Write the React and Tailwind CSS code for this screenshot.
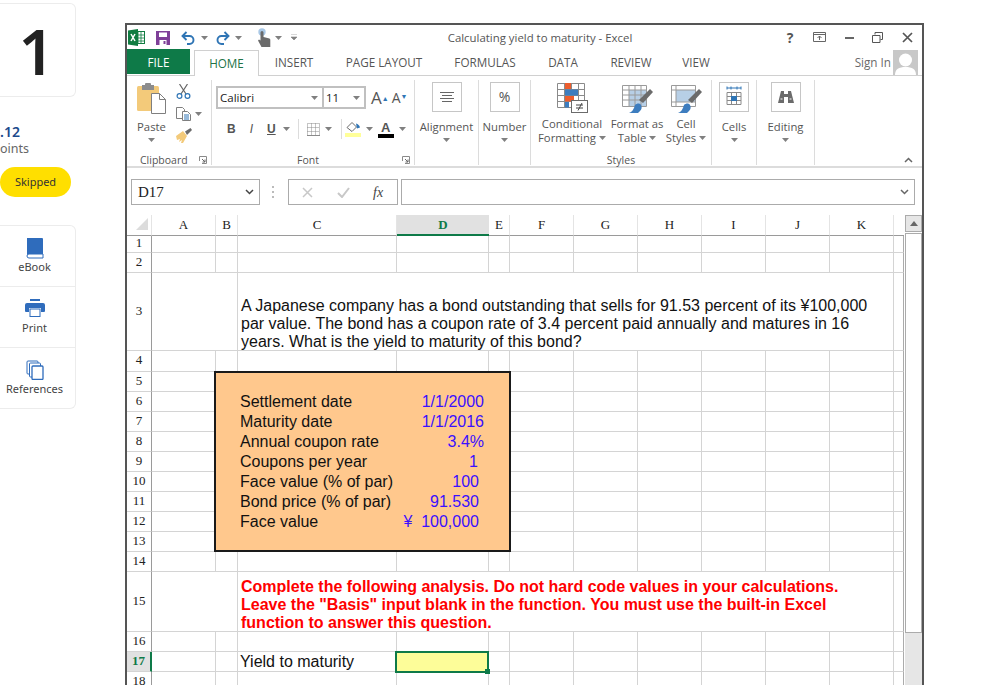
import { Fragment } from 'react'

const COLS = ['A', 'B', 'C', 'D', 'E', 'F', 'G', 'H', 'I', 'J', 'K', '']
const ROW_NUMS = [1, 2, 3, 4, 5, 6, 7, 8, 9, 10, 11, 12, 13, 14, 15, 16, 17, 18]
const BOX_ROWS = [
  { label: 'Settlement date', value: '1/1/2000', cls: '' },
  { label: 'Maturity date', value: '1/1/2016', cls: '' },
  { label: 'Annual coupon rate', value: '3.4%', cls: '' },
  { label: 'Coupons per year', value: '1', cls: 'pr-[6px]' },
  { label: 'Face value (% of par)', value: '100', cls: 'pr-[5px]' },
  { label: 'Bond price (% of par)', value: '91.530', cls: 'pr-[5px]' },
  { label: 'Face value', value: '¥\u00a0\u00a0100,000', cls: 'pr-[5px]' },
]

function Caret({ className = '' }) {
  return (
    <svg width="7" height="4" viewBox="0 0 7 4" className={className}>
      <path d="M0 0h7L3.5 4z" fill="#808080" />
    </svg>
  )
}

function Launcher() {
  return (
    <svg width="8" height="8" viewBox="0 0 8 8" className="ml-auto mr-[4px]">
      <path d="M.5 5V.5H7.5V7.5H3" fill="none" stroke="#8a8a8a" />
      <path d="M3 3l3 3M6 3.5V6H3.5" fill="none" stroke="#666" />
    </svg>
  )
}

function ExcelIcon() {
  return (
    <svg width="17" height="17" viewBox="0 0 17 17">
      <rect x="6" y="2.5" width="10.5" height="12" fill="#fff" stroke="#107c41" />
      <path d="M10 3v11M13 3v11M7 6h9M7 9h9M7 12h9" stroke="#107c41" strokeWidth=".8" />
      <path d="M0 1.5 10 0v17L0 15.5z" fill="#107c41" />
      <path d="M3 5l4 7M7 5l-4 7" stroke="#fff" strokeWidth="1.5" />
    </svg>
  )
}

function SaveIcon() {
  return (
    <svg width="14" height="14" viewBox="0 0 14 14">
      <rect width="14" height="14" fill="#7e3f98" />
      <rect x="3" y="1.5" width="8" height="4.5" fill="#fff" />
      <rect x="3.5" y="9" width="7" height="5" fill="#fff" />
      <rect x="7.5" y="10" width="2" height="3" fill="#7e3f98" />
    </svg>
  )
}

function UndoIcon({ flip }) {
  return (
    <svg width="15" height="14" viewBox="0 0 15 14" className={flip ? '-scale-x-100' : ''}>
      <path d="M5.5 1 1.5 5l4 4" fill="none" stroke="#2f75b5" strokeWidth="1.9" />
      <path d="M2 5h6.5a4 4 0 0 1 0 8H6" fill="none" stroke="#2f75b5" strokeWidth="1.9" />
    </svg>
  )
}

function TouchIcon() {
  return (
    <svg width="15" height="19" viewBox="0 0 15 19">
      <circle cx="5" cy="4" r="3.7" fill="#a9c8e6" />
      <path d="M3.5 4.5a1.5 1.5 0 0 1 3 0V9l6 1.5.8 1V19H4.5L1 12.5l1-1 1.5 1z" fill="#6b6b6b" />
    </svg>
  )
}

function PasteIcon() {
  return (
    <svg width="29" height="31" viewBox="0 0 29 31">
      <rect x="0" y="3" width="22" height="25" rx="1.5" fill="#f3ca7a" />
      <rect x="5" y="2" width="12" height="5" fill="#8c8c8c" />
      <rect x="8" y="0" width="6" height="3" rx="1" fill="#8c8c8c" />
      <path d="M14.5 10.5h8l6 6v14h-14z" fill="#fff" stroke="#7f7f7f" />
      <path d="M22.5 10.5v6h6" fill="none" stroke="#7f7f7f" />
    </svg>
  )
}

function CutIcon() {
  return (
    <svg width="15" height="15" viewBox="0 0 15 15">
      <path d="M3.5 0 10 10M11.5 0 5 10" stroke="#666" strokeWidth="1.2" fill="none" />
      <circle cx="3.5" cy="12" r="2.4" fill="none" stroke="#2f75b5" strokeWidth="1.2" />
      <circle cx="11.5" cy="12" r="2.4" fill="none" stroke="#2f75b5" strokeWidth="1.2" />
    </svg>
  )
}

function CopyIcon() {
  return (
    <svg width="15" height="14" viewBox="0 0 15 14">
      <path d="M.5.5h6l2 2v9h-8z" fill="#fff" stroke="#7f7f7f" />
      <path d="M6.5 4.5h5l3 3v6h-8z" fill="#fff" stroke="#7f7f7f" />
      <path d="M8 8h5M8 10h5M8 12h5" stroke="#2f75b5" />
    </svg>
  )
}

function BrushIcon() {
  return (
    <svg width="16" height="15" viewBox="0 0 16 15">
      <path d="M0 8 7 3l4 5-4 7H5l1-3-3 2 1-3-3 1z" fill="#f3ca7a" />
      <path d="M9 3.5 14.5 0l1.5 2-5 5z" fill="#6b6b6b" />
    </svg>
  )
}

function BordersIcon() {
  return (
    <svg width="13" height="13" viewBox="0 0 13 13">
      <path d="M.5.5h12v12H.5zM4.5.5v12M8.5.5v12M.5 4.5h12M.5 8.5h12" fill="none" stroke="#8a8a8a" strokeDasharray="1 1" />
      <path d="M0 12.5h13" stroke="#8a8a8a" />
    </svg>
  )
}

function FillIcon() {
  return (
    <svg width="16" height="16" viewBox="0 0 16 16">
      <path d="M2 6.5 7 1.5l4.5 4.5L7 10.5z" fill="#fff" stroke="#6b6b6b" />
      <path d="M11 2.5c2 .5 3.5 2 4 4l-3 1z" fill="#2f75b5" />
      <rect x="0" y="12" width="16" height="4" fill="#ffff99" />
    </svg>
  )
}

function CondIcon() {
  return (
    <svg width="31" height="30" viewBox="0 0 31 30">
      <path d="M.5.5h27v24H.5zM7.5.5v24M14.5.5v24M21.5.5v24M.5 6.5h27M.5 12.5h27M.5 18.5h27" fill="#fff" stroke="#8a8a8a" />
      <rect x="8" y="0" width="6" height="6" fill="#ed5d2d" />
      <rect x="8" y="6.5" width="13" height="6" fill="#3d7dbf" />
      <rect x="8" y="13" width="9" height="5.5" fill="#ed5d2d" />
      <rect x="8" y="19" width="4" height="5.5" fill="#3d7dbf" />
      <rect x="14.5" y="17.5" width="16" height="12" fill="#fff" stroke="#6b6b6b" />
      <path d="M19 22h7M19 25h7M25 20l-4 7.5" stroke="#444" fill="none" />
    </svg>
  )
}

function TableIcon({ cell }) {
  return (
    <svg width="31" height="30" viewBox="0 0 31 30">
      <path d="M.5 2.5h24v21H.5z" fill="#fff" stroke="#9a9a9a" />
      {cell ? (
        <>
          <rect x="5" y="7" width="19" height="12" fill="#b7cfe6" />
          <path d="M5 2.5v21M.5 7h24M.5 19h24" stroke="#9a9a9a" fill="none" />
        </>
      ) : (
        <>
          <rect x="7" y="7" width="17" height="16" fill="#b7cfe6" />
          <path d="M7 2.5v21M13 2.5v21M19 2.5v21M.5 7h24M.5 12h24M.5 17h24" stroke="#9a9a9a" fill="none" />
        </>
      )}
      <path d="M17 17 28 6l3 3-10 11z" fill="#6b6b6b" />
      <path d="M7 30c3-1 5-4 6-8 2-2 5-2 6 0s1 4-1 6l-2 2z" fill="#3d7dbf" />
    </svg>
  )
}

function CellsIcon() {
  return (
    <svg width="16" height="22" viewBox="0 0 16 22">
      <path d="M1 2h14M1 .5v3M15 .5v3M5 .5v3M11 .5v3" stroke="#2f75b5" fill="none" />
      <path d="M1 6.5h14v12H1zM1 10.5h14M1 14.5h14M5.5 6.5v12M10.5 6.5v12" stroke="#8a8a8a" fill="none" />
      <rect x="5" y="10" width="6" height="5" fill="#2f75b5" />
    </svg>
  )
}

function FindIcon() {
  return (
    <svg width="16" height="14" viewBox="0 0 16 14">
      <path d="M3 1h3v3h4V1h3l3 12h-6V7H6v6H0z" fill="#6b6b6b" />
      <path d="M2.5 9h2M11.5 9h2" stroke="#fff" />
    </svg>
  )
}

function Sidebar() {
  return (
    <div className="w-[125px] shrink-0 text-center font-['Noto_Sans',sans-serif]">
      <div className="mt-[3px] flex h-[94px] w-[76px] items-center justify-center rounded-r-md border-y border-r border-[#ececec] pr-[2px]">
        <span className="text-[63px] leading-none font-semibold text-[#222]">1</span>
      </div>
      <div className="mt-[26px] flex w-[20px] justify-end whitespace-nowrap text-[14px] leading-[18px] font-semibold text-[#1c4a8c]">3.12</div>
      <div className="flex w-[29px] justify-end whitespace-nowrap text-[12.5px] leading-[16px] text-[#666]">points</div>
      <div className="mt-[10px] flex h-[30px] w-[71px] items-center justify-center rounded-r-full rounded-l-full bg-[#ffdf00] text-[11px] text-[#333]">Skipped</div>
      <div className="mt-[28px] w-[76px] rounded-r-md border-y border-r border-[#ececec] text-[11px] text-[#444]">
        <div className="flex h-[61px] flex-col items-center border-b border-[#ececec] pr-[6px] pt-[12px]">
          <svg width="18" height="21" viewBox="0 0 18 21">
            <path d="M1 0h15a1 1 0 0 1 1 1v16H3a2 2 0 0 0-2 1.5z" fill="#2f6cbc" />
            <path d="M1 18a2 2 0 0 1 2-2h14v4H3a2 2 0 0 1-2-2z" fill="#fff" stroke="#2f6cbc" />
          </svg>
          <span>eBook</span>
        </div>
        <div className="flex h-[61px] flex-col items-center border-b border-[#ececec] pr-[6px] pt-[12px]">
          <svg width="20" height="18" viewBox="0 0 20 18">
            <rect x="5" y="0" width="10" height="2" fill="#2f6cbc" />
            <path d="M2 4h16a2 2 0 0 1 2 2v6a1 1 0 0 1-1 1h-3V9H4v4H1a1 1 0 0 1-1-1V6a2 2 0 0 1 2-2z" fill="#2f6cbc" />
            <rect x="5" y="10" width="10" height="7.5" fill="#fff" stroke="#2f6cbc" />
          </svg>
          <span className="mt-[3px]">Print</span>
        </div>
        <div className="flex h-[60px] flex-col items-center pr-[6px] pt-[12px]">
          <svg width="18" height="20" viewBox="0 0 18 20">
            <rect x="1" y="1" width="11" height="13" rx="1" fill="#fff" stroke="#2f6cbc" />
            <rect x="3.5" y="3" width="11" height="14" rx="1" fill="#fff" stroke="#2f6cbc" />
            <rect x="6" y="6" width="11" height="13.5" rx="1" fill="#fff" stroke="#2f6cbc" strokeWidth="1.3" />
          </svg>
          <span className="mt-[1px] whitespace-nowrap">References</span>
        </div>
      </div>
    </div>
  )
}

function TitleBar() {
  return (
    <div className="flex h-[25px] items-center text-[#555]">
      <div className="ml-[1px] flex w-[175px] shrink-0 items-center">
        <ExcelIcon />
        <span className="ml-[11px]"><SaveIcon /></span>
        <span className="ml-[11px]"><UndoIcon /></span>
        <Caret className="ml-[5px]" />
        <span className="ml-[7px]"><UndoIcon flip /></span>
        <Caret className="ml-[5px]" />
        <span className="ml-[15px]"><TouchIcon /></span>
        <Caret className="ml-[3px]" />
      </div>
      <svg width="6" height="7" viewBox="0 0 6 7" className="-ml-[12px]">
        <path d="M0 0h6M0 3h6l-3 3z" fill="#808080" stroke="#808080" strokeWidth=".6" />
      </svg>
      <div className="ml-[148px] w-[190px] whitespace-nowrap text-center text-[11.4px]">Calculating yield to maturity - Excel</div>
      <div className="ml-[147px] w-[16px] text-center text-[14px] font-bold">?</div>
      <svg width="13" height="11" viewBox="0 0 13 11" className="ml-[15px]">
        <path d="M.5.5h12v9H.5zM.5 2.5h12M6.5 8V4M4.5 6l2-2 2 2" fill="none" stroke="#666" />
      </svg>
      <div className="ml-[19px] h-[2px] w-[9px] bg-[#666]" />
      <svg width="11" height="11" viewBox="0 0 11 11" className="ml-[18px]">
        <path d="M3 2.5V.5h7.5v7H8.5M.5 3.5h7.5v7H.5z" fill="none" stroke="#555" />
      </svg>
      <svg width="11" height="11" viewBox="0 0 11 11" className="ml-[19px]">
        <path d="M1 1l9 9M10 1l-9 9" stroke="#555" strokeWidth="1.7" />
      </svg>
    </div>
  )
}

function Tabs() {
  return (
    <div className="flex h-[26px] items-stretch border-b border-[#d0d0d0] text-[11.7px] text-[#555]">
      <div className="-mt-px mb-px flex w-[63px] items-center justify-center bg-[#0e7a48] pt-[2px] text-white">FILE</div>
      <div className="-mb-px ml-[4px] flex w-[65px] items-center justify-center border-x border-t border-[#d0d0d0] bg-white text-[#217346]">HOME</div>
      <div className="flex w-[70px] items-center justify-center">INSERT</div>
      <div className="flex w-[110px] items-center justify-center">PAGE LAYOUT</div>
      <div className="flex w-[92px] items-center justify-center">FORMULAS</div>
      <div className="flex w-[64px] items-center justify-center">DATA</div>
      <div className="flex w-[72px] items-center justify-center">REVIEW</div>
      <div className="flex w-[58px] items-center justify-center">VIEW</div>
      <div className="ml-auto flex items-center text-[#6a6a6a]">Sign In</div>
      <div className="ml-[2px] mr-[4px] flex h-[25px] w-[25px] items-end justify-center overflow-hidden bg-[#c8c8c8]">
        <svg width="25" height="23" viewBox="0 0 25 23">
          <circle cx="12.5" cy="8" r="6.5" fill="#fff" />
          <path d="M2 23c0-6 4-8 10.5-8S23 17 23 23z" fill="#fff" />
        </svg>
      </div>
    </div>
  )
}

function RibbonBox({ children }) {
  return <div className="mt-[2px] flex h-[30px] w-[30px] items-center justify-center border border-[#c6c6c6]">{children}</div>
}

function Ribbon() {
  return (
    <div className="flex h-[92px] border-b-2 border-[#dcdcdc] pt-[4px] text-[11.3px] leading-[14px] text-[#555]">
      <div className="flex h-[85px] w-[85px] flex-col border-r border-[#dcdcdc]">
        <div className="flex flex-1">
          <div className="ml-[10px] flex w-[29px] flex-col items-center pt-[3px]">
            <PasteIcon />
            <span className="mt-[6px]">Paste</span>
            <Caret className="mt-[4px]" />
          </div>
          <div className="ml-[10px] flex flex-col pt-[4px]">
            <CutIcon />
            <div className="mt-[8px] flex items-center">
              <CopyIcon />
              <Caret className="ml-[4px]" />
            </div>
            <span className="mt-[7px]"><BrushIcon /></span>
          </div>
        </div>
        <div className="flex h-[20px] items-center pl-[13px] pt-[10px] text-[10.5px]">
          Clipboard
          <Launcher />
        </div>
      </div>
      <div className="flex h-[85px] w-[203px] flex-col border-r border-[#dcdcdc]">
        <div className="flex-1 pl-[4px] pt-[6px]">
          <div className="flex items-center">
            <div className="flex h-[23px] w-[108px] items-center justify-between border-2 border-[#c0c0c0] pl-[2px] pr-[4px] text-[11.5px] text-[#222]">
              Calibri
              <Caret />
            </div>
            <div className="-ml-[2px] flex h-[23px] w-[44px] items-center justify-between border-2 border-[#c0c0c0] pl-[2px] pr-[4px] text-[11.5px] text-[#222]">
              11
              <Caret />
            </div>
            <span className="ml-[5px] text-[17px] leading-none">A<sup className="text-[7px] text-[#2f75b5]">▲</sup></span>
            <span className="ml-[3px] text-[14px] leading-none">A<sup className="text-[7px] text-[#2f75b5]">▼</sup></span>
          </div>
          <div className="mt-[10px] flex h-[20px] items-center font-['Liberation_Sans',sans-serif] text-[12px] text-[#555]">
            <span className="ml-[11px] font-bold">B</span>
            <span className="ml-[14px] italic">I</span>
            <span className="ml-[14px] font-bold underline">U</span>
            <Caret className="ml-[7px]" />
            <div className="ml-[8px] h-[20px] w-px bg-[#dcdcdc]" />
            <span className="ml-[8px]"><BordersIcon /></span>
            <Caret className="ml-[5px]" />
            <div className="ml-[9px] h-[20px] w-px bg-[#dcdcdc]" />
            <span className="ml-[3px]"><FillIcon /></span>
            <Caret className="ml-[5px]" />
            <div className="ml-[5px] flex w-[16px] flex-col items-center text-[13px] leading-[13px] font-bold text-[#555]">
              A
              <div className="h-[4px] w-[16px] bg-black" />
            </div>
            <Caret className="ml-[5px]" />
          </div>
        </div>
        <div className="flex h-[20px] items-center pl-[85px] pt-[10px] text-[10.5px]">
          Font
          <Launcher />
        </div>
      </div>
      <div className="flex h-[85px] w-[64px] flex-col items-center border-r border-[#dcdcdc]">
        <RibbonBox>
          <svg width="14" height="11" viewBox="0 0 14 11">
            <path d="M0 .5h14M2 3.5h10M0 6.5h14M2 9.5h10" stroke="#666" />
          </svg>
        </RibbonBox>
        <span className="mt-[8px]">Alignment</span>
        <Caret className="mt-[4px]" />
      </div>
      <div className="flex h-[85px] w-[52px] flex-col items-center border-r border-[#dcdcdc]">
        <RibbonBox><span className="text-[14px] text-[#555]">%</span></RibbonBox>
        <span className="mt-[8px]">Number</span>
        <Caret className="mt-[4px]" />
      </div>
      <div className="flex h-[85px] w-[181px] flex-col border-r border-[#dcdcdc]">
        <div className="flex flex-1 whitespace-nowrap pt-[3px]">
          <div className="flex w-[82px] flex-col items-center text-center">
            <CondIcon />
            <span className="mt-[4px]">Conditional</span>
            <span className="flex items-center">Formatting<Caret className="ml-[3px]" /></span>
          </div>
          <div className="flex w-[48px] flex-col items-center text-center">
            <TableIcon />
            <span className="mt-[4px]">Format as</span>
            <span className="flex items-center">Table<Caret className="ml-[3px]" /></span>
          </div>
          <div className="flex w-[50px] flex-col items-center text-center">
            <TableIcon cell />
            <span className="mt-[4px]">Cell</span>
            <span className="flex items-center">Styles<Caret className="ml-[3px]" /></span>
          </div>
        </div>
        <div className="flex h-[20px] items-center justify-center pt-[10px] text-[10.5px]">Styles</div>
      </div>
      <div className="flex h-[85px] w-[45px] flex-col items-center border-r border-[#dcdcdc]">
        <RibbonBox><CellsIcon /></RibbonBox>
        <span className="mt-[8px]">Cells</span>
        <Caret className="mt-[4px]" />
      </div>
      <div className="flex h-[85px] w-[58px] flex-col items-center border-r border-[#dcdcdc]">
        <RibbonBox><FindIcon /></RibbonBox>
        <span className="mt-[8px]">Editing</span>
        <Caret className="mt-[4px]" />
      </div>
      <svg width="9" height="6" viewBox="0 0 9 6" className="ml-[89px] mt-[77px]">
        <path d="M1 5l3.5-3.5L8 5" fill="none" stroke="#666" strokeWidth="1.5" />
      </svg>
    </div>
  )
}

function FormulaBar() {
  return (
    <div className="flex h-[47px] items-start pt-[11px]">
      <div className="ml-[4px] flex h-[26px] w-[129px] items-center justify-between border border-[#ababab] pl-[6px] pr-[5px] font-['Liberation_Serif',serif] text-[15px] text-[#222]">
        D17
        <svg width="9" height="6" viewBox="0 0 9 6">
          <path d="M1 1l3.5 3.5L8 1" fill="none" stroke="#444" strokeWidth="1.5" />
        </svg>
      </div>
      <div className="ml-[12px] mt-[7px] flex h-[12px] w-[2px] flex-col justify-between">
        <div className="h-[2px] bg-[#bbb]" />
        <div className="h-[2px] bg-[#bbb]" />
        <div className="h-[2px] bg-[#bbb]" />
      </div>
      <div className="ml-[14px] flex h-[26px] w-[110px] items-center border border-[#ababab]">
        <svg width="11" height="11" viewBox="0 0 11 11" className="ml-[13px]">
          <path d="M1 1l9 9M10 1l-9 9" stroke="#c8c8c8" strokeWidth="1.5" />
        </svg>
        <svg width="13" height="11" viewBox="0 0 13 11" className="ml-[24px]">
          <path d="M1 6l4 4 7-9" fill="none" stroke="#c8c8c8" strokeWidth="2" />
        </svg>
        <span className="ml-[23px] font-['Liberation_Serif',serif] text-[14px] italic text-[#444]">fx</span>
      </div>
      <div className="ml-[3px] flex h-[26px] w-[514px] items-center justify-end border border-[#ababab] pr-[5px]">
        <svg width="9" height="6" viewBox="0 0 9 6">
          <path d="M1 1l3.5 3.5L8 1" fill="none" stroke="#666" strokeWidth="1.5" />
        </svg>
      </div>
    </div>
  )
}

function Cell({ children, className = '' }) {
  return <div className={`border-r border-b border-[#d4d4d4] ${className}`}>{children}</div>
}

function SheetRow({ n }) {
  const active = n === 17
  return (
    <Fragment>
      <div className={`flex items-center justify-center border-b border-r pb-[2px] font-['Liberation_Serif',serif] text-[13px] ${active ? 'border-b-[#d4d4d4] border-r-2 border-r-[#0e7a48] bg-[#e1e1e1] font-bold text-[#0e7a48]' : 'border-b-[#d4d4d4] border-r-[#9a9a9a] text-[#222]'}`}>{n}</div>
      {n === 3 && (
        <>
          <Cell className="col-span-2" />
          <Cell className="col-span-9 flex items-end pl-[3px] font-['Liberation_Sans',sans-serif] text-[16px] leading-[18px] text-[#111]">
            <p className="-mb-px">
              A Japanese company has a bond outstanding that sells for 91.53 percent of its ¥100,000<br />
              par value. The bond has a coupon rate of 3.4 percent paid annually and matures in 16<br />
              years. What is the yield to maturity of this bond?
            </p>
          </Cell>
          <Cell className="border-r-[#ababab]" />
        </>
      )}
      {n === 15 && (
        <>
          <Cell className="col-span-2" />
          <Cell className="col-span-9 flex items-center pl-[3px] pt-[6px] font-['Liberation_Sans',sans-serif] text-[16px] leading-[18px] font-bold text-[#ff0000]">
            <p>
              Complete the following analysis. Do not hard code values in your calculations.<br />
              Leave the "Basis" input blank in the function. You must use the built-in Excel<br />
              function to answer this question.
            </p>
          </Cell>
          <Cell className="border-r-[#ababab]" />
        </>
      )}
      {n !== 3 && n !== 15 && COLS.map((c) => {
        if (n >= 5 && n <= 13 && ['B', 'C', 'D', 'E'].includes(c)) return null
        if (active && c === 'C') {
          return (
            <Cell key={c} className="flex items-center pl-[2px] font-['Liberation_Sans',sans-serif] text-[16px] text-[#111]">Yield to maturity</Cell>
          )
        }
        if (active && c === 'D') {
          return (
            <div key={c} className="relative z-10 -my-px -ml-[2px] border-2 border-[#0e7a48] bg-[#fdfd99]">
              <div className="absolute -right-[3px] -bottom-[3px] h-[5px] w-[5px] bg-[#0e7a48]" />
            </div>
          )
        }
        return <Cell key={c} className={c === '' ? 'border-r-[#ababab]' : ''} />
      })}
    </Fragment>
  )
}

function Sheet() {
  return (
    <div className="flex h-[470px]">
      <div className="grid w-[777px] grid-cols-[25px_64px_22px_159px_92px_21px_64px_64px_64px_64px_64px_64px_10px] grid-rows-[21px_17px_20px_78px_21px_repeat(9,20px)_20px_60px_20px_20px_20px]">
        <div className="z-10 col-start-3 col-end-7 row-start-6 row-end-15 -ml-[2px] -mr-px -mt-px border-2 border-[#1a1a1a] bg-[#ffc88d] pl-[24px] pr-[25px] pt-[19px] font-['Liberation_Sans',sans-serif] text-[16px] leading-[20px] text-[#111]">
          {BOX_ROWS.map((r) => (
            <div key={r.label} className="flex justify-between">
              <span>{r.label}</span>
              <span className={`text-[#3a10ff] ${r.cls}`}>{r.value}</span>
            </div>
          ))}
        </div>
        <div className="flex items-start justify-end border-r border-b border-r-[#e4e4e4] border-b-[#9a9a9a] pr-[3px] pt-[3px]">
          <svg width="12" height="12" viewBox="0 0 12 12">
            <path d="M12 0v12H0z" fill="#dcdcdc" />
          </svg>
        </div>
        {COLS.map((c) => (
          <div
            key={c}
            className={`flex items-center justify-center font-['Liberation_Serif',serif] text-[13px] ${c === 'D' ? 'border-b-2 border-b-[#0e7a48] bg-[#e1e1e1] font-bold text-[#0e7a48]' : 'border-b border-r border-b-[#9a9a9a] border-r-[#e4e4e4] text-[#222]'} ${c === '' ? 'border-r-0' : ''}`}
          >
            {c}
          </div>
        ))}
        {ROW_NUMS.map((n) => <SheetRow key={n} n={n} />)}
      </div>
      <div className="ml-[1px] flex w-[17px] flex-col">
        <div className="flex h-[17px] items-center justify-center border border-[#ababab] bg-[#e6e6e6]">
          <svg width="8" height="5" viewBox="0 0 8 5"><path d="M4 0l4 5H0z" fill="#666" /></svg>
        </div>
        <div className="mt-px h-[400px] border border-[#ababab] bg-white" />
        <div className="flex-1 bg-[#e6e6e6]" />
      </div>
    </div>
  )
}

export default function App() {
  return (
    <div className="flex h-[685px] overflow-hidden bg-white">
      <Sidebar />
      <div className="mt-[23px] h-[662px] w-[799px] shrink-0 overflow-hidden border-x-2 border-t-2 border-[#555] font-['Open_Sans',sans-serif]">
        <TitleBar />
        <Tabs />
        <Ribbon />
        <FormulaBar />
        <Sheet />
      </div>
    </div>
  )
}
